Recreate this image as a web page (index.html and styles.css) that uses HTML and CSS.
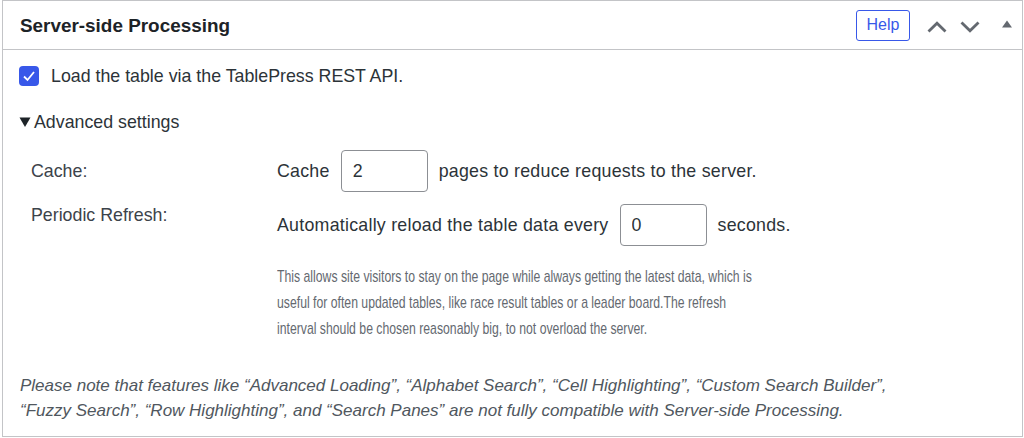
FILE: index.html
```html
<!DOCTYPE html>
<html lang="en">
<head>
<meta charset="utf-8">
<title>Server-side Processing</title>
<link rel="stylesheet" href="styles.css">
</head>
<body>
<div class="postbox">
  <div class="postbox-header">
    <h2 class="postbox-title">Server-side Processing</h2>
    <button class="help-btn" type="button">Help</button>
    <span class="handle-btn">
      <svg width="20" height="12" viewBox="0 0 20 12"><path d="M1.5 10.5 L10 2.2 L18.5 10.5" fill="none" stroke="#646970" stroke-width="2.8"/></svg>
    </span>
    <span class="handle-btn">
      <svg width="20" height="12" viewBox="0 0 20 12"><path d="M1.5 1.5 L10 9.8 L18.5 1.5" fill="none" stroke="#646970" stroke-width="2.8"/></svg>
    </span>
    <span class="handle-btn toggle">
      <svg width="10" height="8" viewBox="0 0 10 8"><path d="M5 0.5 L10 7.5 L0 7.5 Z" fill="#646970"/></svg>
    </span>
  </div>
  <div class="postbox-inside">
    <label class="check-row">
      <span class="checkbox">
        <svg width="14" height="12" viewBox="0 0 14 12"><path d="M2 6.5 L5.5 10 L12 2" fill="none" stroke="#fff" stroke-width="1.8"/></svg>
      </span>
      <span>Load the table via the TablePress REST API.</span>
    </label>
    <div class="advanced">
      <div class="summary"><svg class="marker" width="12" height="10" viewBox="0 0 12 10"><path d="M0.5 0.5 L11.5 0.5 L6 10 Z" fill="#1d2327"/></svg>Advanced settings</div>
      <div class="settings">
        <div class="setting-label row1">Cache:</div>
        <div class="setting-field row1">Cache <input class="num" type="text" value="2"> pages to reduce requests to the server.</div>
        <div class="setting-label row2">Periodic Refresh:</div>
        <div class="setting-field">
          <div class="field-line">Automatically reload the table data every <input class="num" type="text" value="0"> seconds.</div>
          <p class="desc">This allows site visitors to stay on the page while always getting the latest data, which is useful for often updated tables, like race result tables or a leader board.The refresh interval should be chosen reasonably big, to not overload the server.</p>
        </div>
      </div>
    </div>
    <p class="note">Please note that features like “Advanced Loading”, “Alphabet Search”, “Cell Highlighting”, “Custom Search Builder”, “Fuzzy Search”, “Row Highlighting”, and “Search Panes” are not fully compatible with Server-side Processing.</p>
  </div>
</div>
</body>
</html>
```
FILE: styles.css
```css
html, body {
  margin: 0;
  padding: 0;
  background: #fff;
}
body {
  font-family: "Liberation Sans", Arial, sans-serif;
  font-size: 17.8px;
  color: #2c3338;
}
.postbox {
  margin: 0 1px 0 2px;
  height: 437px;
  box-sizing: border-box;
  border: 1px solid #c3c4c7;
  display: flex;
  flex-direction: column;
  overflow: hidden;
}
.postbox-header {
  flex-shrink: 0;
  height: 48px;
  border-bottom: 1px solid #c3c4c7;
  display: flex;
  align-items: center;
  padding: 0 0 0 17px;
}
.postbox-title {
  margin: 0;
  flex: 1;
  font-size: 18.9px;
  font-weight: bold;
  color: #1d2327;
  padding-top: 1px;
}
.help-btn {
  font-family: inherit;
  font-size: 16px;
  color: #3858e9;
  background: #fff;
  border: 1px solid #3858e9;
  border-radius: 3px;
  height: 31px;
  width: 54px;
  padding: 0;
  margin: 0 10px 0 0;
}
.handle-btn {
  width: 33px;
  display: flex;
  justify-content: center;
  align-items: center;
  padding-top: 4px;
}
.handle-btn.toggle {
  width: 36px;
  box-sizing: border-box;
  justify-content: flex-end;
  padding: 0 10px 2px 0;
}
.postbox-inside {
  padding: 16px 16px 0 16px;
  flex: 1;
}
.check-row {
  display: flex;
  align-items: center;
  gap: 12px;
  height: 20px;
}
.checkbox {
  width: 20px;
  height: 20px;
  border-radius: 4px;
  background: #3858e9;
  display: flex;
  align-items: center;
  justify-content: center;
}
.advanced {
  margin-top: 23px;
}
.summary {
  height: 26px;
  line-height: 26px;
  display: flex;
  align-items: center;
}
.marker {
  margin-right: 3px;
}
.settings {
  display: grid;
  grid-template-columns: 246px 1fr;
  padding-left: 12px;
  margin-top: 15px;
  row-gap: 12px;
}
.setting-label {
  color: #3c434a;
}
.setting-label.row1 {
  line-height: 42px;
}
.setting-label.row2 {
  line-height: 22px;
}
.setting-field {
  letter-spacing: 0.25px;
}
.setting-field.row1,
.field-line {
  display: flex;
  align-items: center;
  gap: 11px;
  height: 42px;
}
.num {
  width: 87px;
  height: 42px;
  box-sizing: border-box;
  border: 1px solid #8c8f94;
  border-radius: 4px;
  font-family: inherit;
  font-size: 17.8px;
  color: #2c3338;
  padding: 0 11px;
  margin: 0;
}
.desc {
  margin: 18px 0 0 0;
  color: #646970;
  font-size: 17px;
  letter-spacing: 0;
  line-height: 26px;
  width: 674px;
  transform: scaleX(0.72);
  transform-origin: left top;
}
.note {
  margin: 31px 0 0 1px;
  font-style: italic;
  color: #50575e;
  font-size: 17px;
  line-height: 25px;
  max-width: 900px;
}
```
